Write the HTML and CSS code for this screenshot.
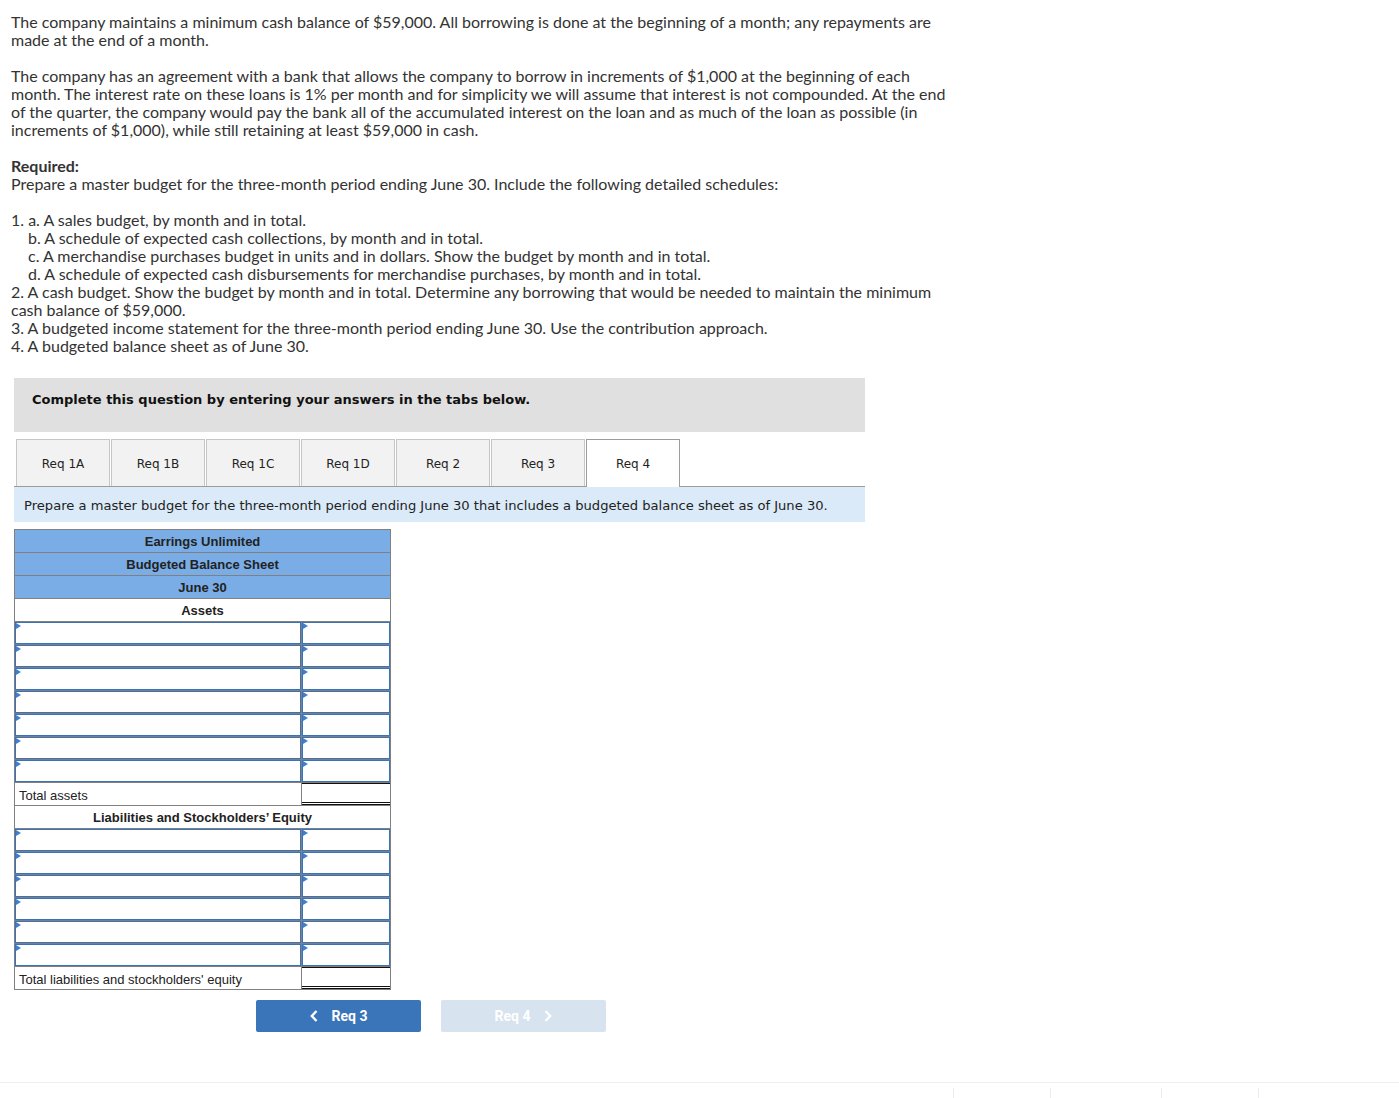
FILE: index.html
```html
<!DOCTYPE html>
<html lang="en">
<head>
<meta charset="utf-8">
<title>Budgeted Balance Sheet</title>
<link rel="stylesheet" href="styles.css">
</head>
<body>
<div class="page">
  <div class="intro">
    <p>The company maintains a minimum cash balance of $59,000. All borrowing is done at the beginning of a month; any repayments are<br>made at the end of a month.</p>
    <p>The company has an agreement with a bank that allows the company to borrow in increments of $1,000 at the beginning of each<br>month. The interest rate on these loans is 1% per month and for simplicity we will assume that interest is not compounded. At the end<br>of the quarter, the company would pay the bank all of the accumulated interest on the loan and as much of the loan as possible (in<br>increments of $1,000), while still retaining at least $59,000 in cash.</p>
    <p><strong>Required:</strong><br>Prepare a master budget for the three-month period ending June 30. Include the following detailed schedules:</p>
    <div class="reqs">
      <div>1. a. A sales budget, by month and in total.</div>
      <div class="sub">b. A schedule of expected cash collections, by month and in total.</div>
      <div class="sub">c. A merchandise purchases budget in units and in dollars. Show the budget by month and in total.</div>
      <div class="sub">d. A schedule of expected cash disbursements for merchandise purchases, by month and in total.</div>
      <div>2. A cash budget. Show the budget by month and in total. Determine any borrowing that would be needed to maintain the minimum<br>cash balance of $59,000.</div>
      <div>3. A budgeted income statement for the three-month period ending June 30. Use the contribution approach.</div>
      <div>4. A budgeted balance sheet as of June 30.</div>
    </div>
  </div>

  <section class="question">
    <div class="banner">Complete this question by entering your answers in the tabs below.</div>
    <div class="tabs">
      <div class="tab">Req 1A</div>
      <div class="tab">Req 1B</div>
      <div class="tab">Req 1C</div>
      <div class="tab">Req 1D</div>
      <div class="tab">Req 2</div>
      <div class="tab">Req 3</div>
      <div class="tab active">Req 4</div>
    </div>
    <div class="prompt">Prepare a master budget for the three-month period ending June 30 that includes a budgeted balance sheet as of June 30.</div>

    <table class="sheet">
      <colgroup><col class="c-label"><col class="c-value"></colgroup>
      <tr><td colspan="2" class="head">Earrings Unlimited</td></tr>
      <tr><td colspan="2" class="head">Budgeted Balance Sheet</td></tr>
      <tr><td colspan="2" class="head">June 30</td></tr>
      <tr><td colspan="2" class="section">Assets</td></tr>
      <tr><td class="in"></td><td class="in"></td></tr>
      <tr><td class="in"></td><td class="in"></td></tr>
      <tr><td class="in"></td><td class="in"></td></tr>
      <tr><td class="in"></td><td class="in"></td></tr>
      <tr><td class="in"></td><td class="in"></td></tr>
      <tr><td class="in"></td><td class="in"></td></tr>
      <tr><td class="in"></td><td class="in"></td></tr>
      <tr><td class="label">Total assets</td><td class="total"><div class="dbl"></div></td></tr>
      <tr><td colspan="2" class="section">Liabilities and Stockholders’ Equity</td></tr>
      <tr><td class="in"></td><td class="in"></td></tr>
      <tr><td class="in"></td><td class="in"></td></tr>
      <tr><td class="in"></td><td class="in"></td></tr>
      <tr><td class="in"></td><td class="in"></td></tr>
      <tr><td class="in"></td><td class="in"></td></tr>
      <tr><td class="in"></td><td class="in"></td></tr>
      <tr><td class="label">Total liabilities and stockholders' equity</td><td class="total"><div class="dbl"></div></td></tr>
    </table>

    <div class="nav">
      <button class="btn prev" type="button">
        <svg class="chev" width="8" height="12" viewBox="0 0 8 12"><polyline points="6.5,1 1.8,6 6.5,11" fill="none" stroke="#fff" stroke-width="2.4"/></svg>
        <span>Req 3</span>
      </button>
      <button class="btn next" type="button" disabled>
        <span>Req 4</span>
        <svg class="chev" width="8" height="12" viewBox="0 0 8 12"><polyline points="1.5,1 6.2,6 1.5,11" fill="none" stroke="#fff" stroke-width="2.4"/></svg>
      </button>
    </div>
  </section>
</div>
<footer class="foot">
  <span class="fitem w1"></span>
  <span class="fitem w2"></span>
  <span class="fitem w3"></span>
  <span class="fitem w4"></span>
</footer>
</body>
</html>
```

FILE: styles.css
```css
html, body {
  margin: 0;
  padding: 0;
  background: #fff;
}

.page {
  padding: 13px 0 0 11px;
}

.intro {
  width: 1000px;
  font-family: "Lato", "Liberation Sans", sans-serif;
  font-size: 16px;
  line-height: 18px;
  color: #333;
}

.intro p {
  margin: 0 0 18px;
}

.intro strong {
  font-weight: 700;
}

.reqs .sub {
  padding-left: 17px;
}

.question {
  margin: 23px 0 0 3px;
  width: 851px;
}

.banner {
  height: 54px;
  box-sizing: border-box;
  padding: 13px 0 0 18px;
  background: #e0e0e0;
  font-family: "DejaVu Sans", Verdana, sans-serif;
  font-weight: 700;
  font-size: 13px;
  line-height: 18px;
  color: #111;
}

.tabs {
  margin-top: 7px;
  display: flex;
  gap: 1px;
  padding-left: 2px;
  height: 47px;
  border-bottom: 1px solid #9c9c9c;
  align-items: flex-start;
}

.tab {
  width: 94px;
  height: 47px;
  box-sizing: border-box;
  border: 1px solid #c6c6c6;
  border-bottom: none;
  background: #f2f2f2;
  display: flex;
  align-items: center;
  justify-content: center;
  padding-top: 2px;
  font-family: "DejaVu Sans", Verdana, sans-serif;
  font-size: 12px;
  color: #222;
}

.tab.active {
  height: 48px;
  margin-bottom: -1px;
  padding-top: 1px;
  background: #fff;
  border-color: #9c9c9c;
  position: relative;
}

.prompt {
  height: 35px;
  box-sizing: border-box;
  padding-left: 10px;
  padding-top: 1px;
  display: flex;
  align-items: center;
  background: #daeaf8;
  font-family: "DejaVu Sans", Verdana, sans-serif;
  font-size: 13.1px;
  color: #222;
}

.sheet {
  margin-top: 7px;
  border-collapse: collapse;
  width: 377px;
  table-layout: fixed;
  font-family: "Liberation Sans", Arial, sans-serif;
  font-size: 13px;
  color: #222;
}

.c-label { width: 287px; }
.c-value { width: 89px; }

.sheet td {
  border: 1px solid #808080;
  height: 23px;
  padding: 0;
  box-sizing: border-box;
}

.sheet td.head {
  background: #7aade5;
  text-align: center;
  font-weight: 700;
}

.sheet td.section {
  background: #fff;
  text-align: center;
  font-weight: 700;
}

.sheet td.in {
  position: relative;
  box-shadow: inset 0 0 0 1px #3b73b9;
}

.sheet td.in::before {
  content: "";
  position: absolute;
  left: 1px;
  top: 1px;
  border-left: 5px solid #3f7fd0;
  border-top: 3px solid transparent;
  border-bottom: 3px solid transparent;
}

.sheet td.label {
  padding-left: 4px;
  padding-top: 2px;
  vertical-align: middle;
}

.sheet td.total {
  vertical-align: top;
}

.dbl {
  height: 22px;
  box-sizing: border-box;
  border-top: 1px solid #111;
  border-bottom: 3px double #111;
}

.nav {
  margin-top: 10px;
  display: flex;
  gap: 20px;
  padding-left: 242px;
}

.btn {
  width: 165px;
  height: 32px;
  border: none;
  border-radius: 2px;
  display: flex;
  align-items: center;
  justify-content: center;
  gap: 14px;
  font-family: "Roboto", "Liberation Sans", sans-serif;
  font-weight: 700;
  font-size: 14px;
  color: #fff;
  padding: 0;
}

.btn.prev {
  background: #3a75ba;
}

.btn.next {
  background: #d8e3f0;
}

.chev {
  display: block;
}

.foot {
  margin-top: 50px;
  border-top: 1px solid #eeeeee;
  display: flex;
  justify-content: flex-end;
  padding-top: 5px;
  height: 30px;
}

.fitem {
  height: 30px;
  box-sizing: border-box;
  border-left: 1px solid #ececec;
}

.w1 { width: 97px; }
.w2 { width: 111px; }
.w3 { width: 97px; }
.w4 { width: 141px; }
```
